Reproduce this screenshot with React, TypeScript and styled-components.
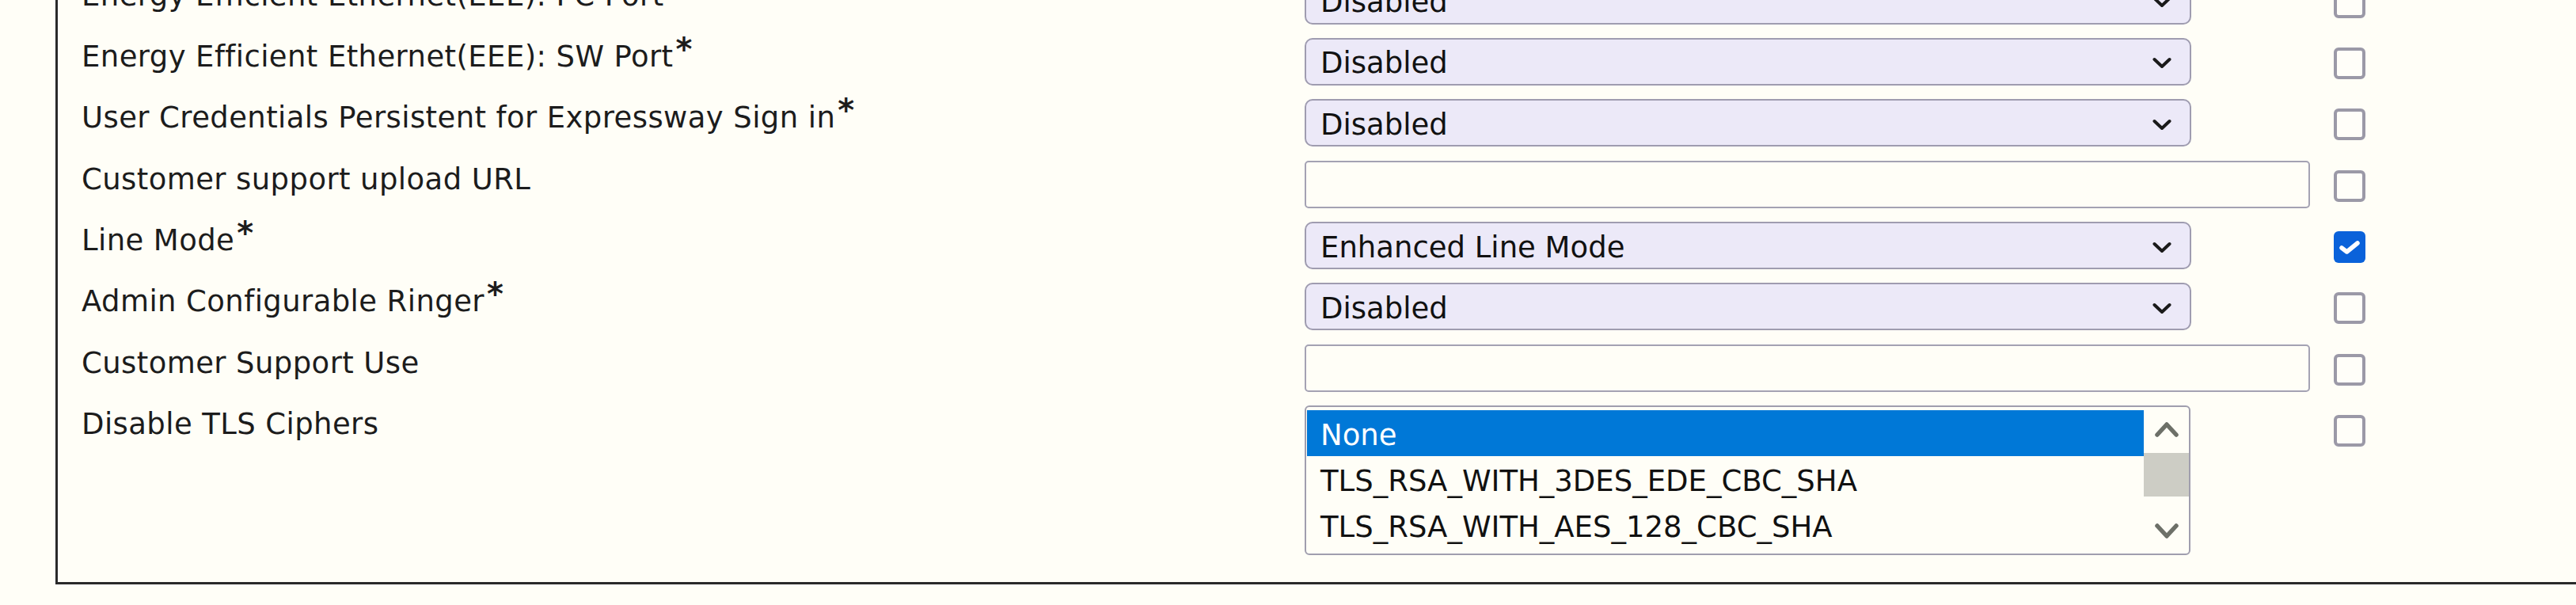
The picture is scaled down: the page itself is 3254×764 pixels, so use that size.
import React from "react";
import styled, { createGlobalStyle } from "styled-components";

const GlobalStyle = createGlobalStyle`
  html, body {
    margin: 0;
    padding: 0;
    background: #fffef7;
    overflow: hidden;
  }
  body {
    font-family: "DejaVu Sans", Verdana, sans-serif;
    color: #1c1c1c;
  }
`;

const Page = styled.div`
  width: 3254px;
  height: 764px;
  overflow: hidden;
  box-sizing: border-box;
  padding-left: 70px;
`;

const Panel = styled.div`
  margin-top: -60px;
  border: 3px solid #2a2a2a;
  border-right: none;
  padding: 18.9px 0 24.9px 30px;
  display: flex;
  flex-direction: column;
`;

const Row = styled.div`
  display: grid;
  grid-template-columns: 1545px 1300px 40px;
  align-items: start;
  padding: 8.7px 0;
`;

const Label = styled.div`
  font-size: 37px;
  line-height: 44px;
  height: 46px;
  padding-top: 2px;
  box-sizing: border-box;
  letter-spacing: 0.4px;
  white-space: nowrap;
  color: #1c1c1c;
`;

const Req = styled.span`
  font-weight: bold;
  font-size: 40px;
  line-height: 0;
  vertical-align: 8px;
  margin-left: 3px;
`;

const Field = styled.div`
  display: flex;
`;

const SelectBox = styled.div`
  width: 1120px;
  height: 60px;
  box-sizing: border-box;
  border: 2px solid #9f9cb0;
  border-radius: 10px;
  background: #ece9f8;
  display: flex;
  align-items: center;
  justify-content: space-between;
  padding: 4px 23px 0 18px;
  font-size: 37px;
  color: #111;
`;

const TextInput = styled.div`
  width: 1270px;
  height: 60px;
  box-sizing: border-box;
  border: 2px solid #a4a2b3;
  border-radius: 5px;
  background: #fffef7;
`;

const Check = styled.div<{ $checked?: boolean }>`
  width: 40px;
  height: 40px;
  box-sizing: border-box;
  margin-top: 12px;
  border-radius: 6px;
  border: ${(p) => (p.$checked ? "none" : "4px solid #9b99a7")};
  background: ${(p) => (p.$checked ? "#0a62da" : "#fffef9")};
  display: flex;
  align-items: center;
  justify-content: center;
`;

const ListBox = styled.div`
  width: 1119px;
  height: 189px;
  box-sizing: border-box;
  border: 2px solid #a09eae;
  border-radius: 6px;
  background: #fffef7;
  display: flex;
  overflow: hidden;
`;

const Options = styled.div`
  flex: 1;
  display: flex;
  flex-direction: column;
  padding: 4px 0 0 1px;
`;

const Option = styled.div<{ $selected?: boolean }>`
  height: 58px;
  box-sizing: border-box;
  padding: 6px 0 0 17px;
  line-height: 52px;
  font-size: 37px;
  white-space: nowrap;
  background: ${(p) => (p.$selected ? "#0078d7" : "transparent")};
  color: ${(p) => (p.$selected ? "#ffffff" : "#111111")};
`;

const ScrollBar = styled.div`
  width: 57px;
  display: flex;
  flex-direction: column;
`;

const ScrollButton = styled.div`
  height: 56px;
  display: flex;
  align-items: center;
  justify-content: center;
`;

const Track = styled.div`
  flex: 1;
  padding-top: 2px;
`;

const Thumb = styled.div`
  height: 55px;
  background: #cdcdc5;
`;

const Chevron = () => (
  <svg width="24" height="15" viewBox="0 0 24 15">
    <polyline
      points="2.5,3 12,12 21.5,3"
      fill="none"
      stroke="#1a1a1a"
      strokeWidth="4"
      strokeLinecap="round"
      strokeLinejoin="round"
    />
  </svg>
);

const ScrollArrow = ({ up }: { up?: boolean }) => (
  <svg width="32" height="22" viewBox="0 0 32 22">
    <polyline
      points={up ? "4,18 16,5 28,18" : "4,4 16,17 28,4"}
      fill="none"
      stroke="#6d7068"
      strokeWidth="5.5"
      strokeLinecap="round"
      strokeLinejoin="round"
    />
  </svg>
);

const CheckMark = () => (
  <svg width="34" height="34" viewBox="0 0 34 34">
    <polyline
      points="7,18 13.5,23 27,12"
      fill="none"
      stroke="#ffffff"
      strokeWidth="5.5"
      strokeLinecap="round"
      strokeLinejoin="round"
    />
  </svg>
);

type RowData = {
  label: string;
  required?: boolean;
  kind: "select" | "input" | "list";
  value?: string;
  checked?: boolean;
};

const rows: RowData[] = [
  { label: "Energy Efficient Ethernet(EEE): PC Port", required: true, kind: "select", value: "Disabled" },
  { label: "Energy Efficient Ethernet(EEE): SW Port", required: true, kind: "select", value: "Disabled" },
  { label: "User Credentials Persistent for Expressway Sign in", required: true, kind: "select", value: "Disabled" },
  { label: "Customer support upload URL", kind: "input" },
  { label: "Line Mode", required: true, kind: "select", value: "Enhanced Line Mode", checked: true },
  { label: "Admin Configurable Ringer", required: true, kind: "select", value: "Disabled" },
  { label: "Customer Support Use", kind: "input" },
  { label: "Disable TLS Ciphers", kind: "list" },
];

const ciphers = ["None", "TLS_RSA_WITH_3DES_EDE_CBC_SHA", "TLS_RSA_WITH_AES_128_CBC_SHA"];

export default function App() {
  return (
    <>
      <GlobalStyle />
      <Page>
        <Panel>
          {rows.map((r) => (
            <Row key={r.label}>
              <Label>
                {r.label}
                {r.required && <Req>*</Req>}
              </Label>
              <Field>
                {r.kind === "select" && (
                  <SelectBox>
                    <span>{r.value}</span>
                    <Chevron />
                  </SelectBox>
                )}
                {r.kind === "input" && <TextInput />}
                {r.kind === "list" && (
                  <ListBox>
                    <Options>
                      {ciphers.map((c, i) => (
                        <Option key={c} $selected={i === 0}>
                          {c}
                        </Option>
                      ))}
                    </Options>
                    <ScrollBar>
                      <ScrollButton>
                        <ScrollArrow up />
                      </ScrollButton>
                      <Track>
                        <Thumb />
                      </Track>
                      <ScrollButton>
                        <ScrollArrow />
                      </ScrollButton>
                    </ScrollBar>
                  </ListBox>
                )}
              </Field>
              <Check $checked={r.checked}>{r.checked && <CheckMark />}</Check>
            </Row>
          ))}
        </Panel>
      </Page>
    </>
  );
}
